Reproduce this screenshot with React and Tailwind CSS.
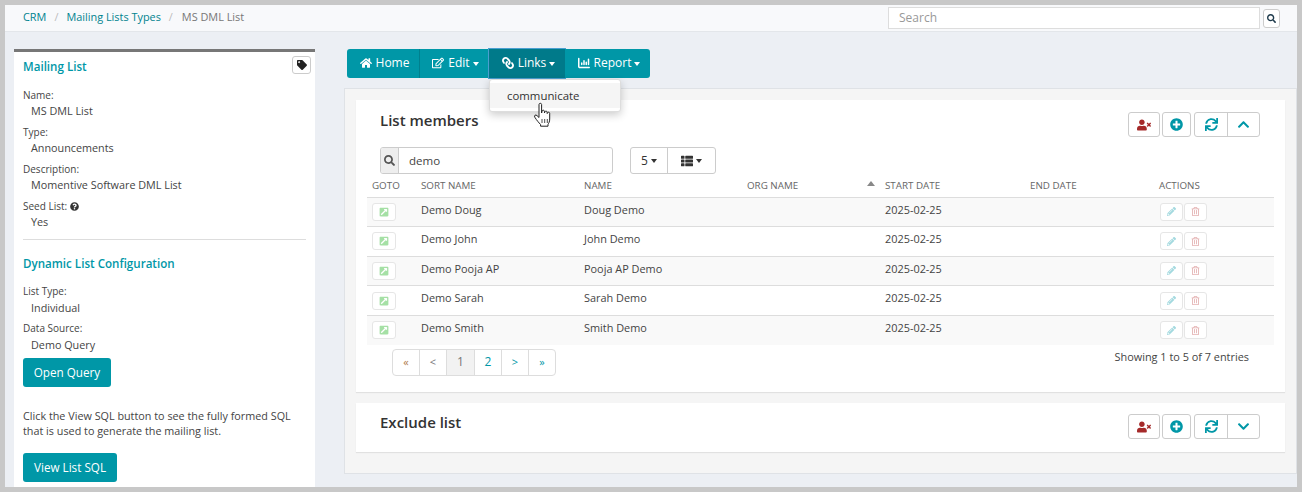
import React from 'react';
import {
  FaHome, FaRegEdit, FaLink, FaTag, FaQuestionCircle, FaSearch, FaUserTimes,
  FaPlusCircle, FaSync, FaChevronUp, FaChevronDown, FaPencilAlt, FaRegTrashAlt, FaExternalLinkSquareAlt, FaThList,
} from 'react-icons/fa';
import { FaChartColumn } from 'react-icons/fa6';

const members = [
  ['Demo Doug', 'Doug Demo'],
  ['Demo John', 'John Demo'],
  ['Demo Pooja AP', 'Pooja AP Demo'],
  ['Demo Sarah', 'Sarah Demo'],
  ['Demo Smith', 'Smith Demo'],
];

const Caret = () => (
  <span className="ml-[3px] inline-block h-0 w-0 border-x-[3.5px] border-t-[4px] border-x-transparent border-t-current align-middle" />
);

const Field = ({ label, value, extra }) => (
  <div className="mb-[5px]">
    <div className="flex items-center gap-[3px] text-[10px] leading-[16px] text-[#444]">{label}{extra}</div>
    <div className="pl-2 text-[10.8px] leading-[16px] text-[#444]">{value}</div>
  </div>
);

const ToolButton = ({ icon: Icon, label, caret, active, width, flip }) => (
  <button
    className={`flex h-[29px] items-center justify-center gap-[4px] pb-[1px] pl-[3px] text-[12px] text-white first:rounded-l-[3px] last:rounded-r-[3px] ${width} ${
      active ? 'bg-[#007a8a] outline outline-[#4a9fd0]' : 'border-r border-[#00808e] bg-[#0097a7] last:border-r-0'
    }`}
  >
    <Icon className={`text-[12px] ${flip ? '-scale-x-100' : ''}`} />
    <span>{label}{caret && <Caret />}</span>
  </button>
);

const PanelTools = ({ icon: Chevron }) => (
  <div className="flex gap-[2px]">
    <button className="flex h-[25px] w-[32px] items-center justify-center rounded-[3px] border border-[#ccc] bg-white text-[14px] text-[#a52a2a]">
      <FaUserTimes />
    </button>
    <button className="flex h-[25px] w-[29px] items-center justify-center rounded-[3px] border border-[#ccc] bg-white text-[13px] text-[#0097a7]">
      <FaPlusCircle />
    </button>
    <div className="ml-[1px] flex rounded-[3px] border border-[#ccc] bg-white text-[13px] text-[#0097a7]">
      <span className="flex h-[23px] w-[33px] items-center justify-center border-r border-[#ccc]"><FaSync /></span>
      <span className="flex h-[23px] w-[31px] items-center justify-center"><Chevron /></span>
    </div>
  </div>
);

const Pager = () => {
  const cells = [
    ['«', 'w-[27px] text-[#b07a4a]'],
    ['<', 'w-[27px] text-[#777]'],
    ['1', 'w-[28px] bg-[#f2f2f2] text-[#777] text-[12px]'],
    ['2', 'w-[27px] text-[#0097a7] text-[12px]'],
    ['>', 'w-[27px] text-[#0097a7]'],
    ['»', 'w-[26px] text-[#0097a7]'],
  ];
  return (
    <div className="flex h-[27px] overflow-hidden rounded-[4px] border border-[#ddd] bg-white">
      {cells.map(([t, c]) => (
        <span key={t} className={`flex items-center justify-center border-r border-[#ddd] text-[11px] last:border-r-0 ${c}`}>{t}</span>
      ))}
    </div>
  );
};

export default function App() {
  return (
    <div className="h-[492px] w-[1302px] overflow-hidden border-[5px] border-[#c8c8c8] bg-[#eceff4] font-['Open_Sans',sans-serif] text-[#444]">
      {/* breadcrumb bar */}
      <header className="flex h-[27px] items-center justify-between border-b border-[#e3e6ea] bg-[#f8f9fb] pl-[18px] pr-[17px] text-[10.9px]">
        <div className="flex items-center pb-[1px]">
          <span className="text-[#00838f]">CRM</span>
          <span className="px-[8px] text-[#bbb]">/</span>
          <span className="text-[#00838f]">Mailing Lists Types</span>
          <span className="pl-[8px] pr-[9px] text-[#bbb]">/</span>
          <span className="text-[#777]">MS DML List</span>
        </div>
        <div className="flex items-center gap-[3px]">
          <div className="flex h-[22px] w-[372px] items-center border border-[#ddd] bg-white pb-[1px] pl-[10px] text-[12px] text-[#999]">Search</div>
          <button className="flex h-[19px] w-[17px] items-center justify-center rounded-[3px] border border-[#ccc] bg-white text-[9px] text-[#1f3b4d]">
            <FaSearch />
          </button>
        </div>
      </header>

      <div className="flex items-start pl-[9px] pt-[17px]">
        {/* left column */}
        <aside className="h-[440px] w-[301px] shrink-0 border-t-[3px] border-[#777] bg-white pl-[9px] pr-[4px] pt-[4px]">
          <div className="flex items-start justify-between">
            <h3 className="pt-[2px] text-[11.6px] leading-[18px] font-semibold text-[#0097a7]">Mailing List</h3>
            <button className="flex h-[18px] w-[19px] items-center justify-center rounded-[3px] border border-[#ccc] bg-white text-[10px] text-[#222]">
              <FaTag />
            </button>
          </div>
          <div className="pt-[11px]">
            <Field label="Name:" value="MS DML List" />
            <Field label="Type:" value="Announcements" />
            <Field label="Description:" value="Momentive Software DML List" />
            <Field label="Seed List:" value="Yes" extra={<FaQuestionCircle className="text-[9px] text-[#333]" />} />
          </div>
          <hr className="mr-[5px] mt-[9px] border-[#ddd]" />
          <h3 className="mb-[10px] mt-[15px] text-[11.6px] leading-[18px] font-semibold text-[#0097a7]">Dynamic List Configuration</h3>
          <div className="mb-[3px]">
            <div className="text-[10px] leading-[16px] text-[#444]">List Type:</div>
            <div className="pl-2 text-[10.8px] leading-[18px] text-[#444]">Individual</div>
          </div>
          <div>
            <div className="text-[10px] leading-[16px] text-[#444]">Data Source:</div>
            <div className="pl-2 text-[10.8px] leading-[18px] text-[#444]">Demo Query</div>
          </div>
          <button className="mt-[4px] block h-[29px] w-[88px] rounded-[3px] bg-[#0097a7] text-[11.7px] text-white">Open Query</button>
          <p className="mr-[5px] mt-[21px] text-[10.8px] leading-[15px] text-[#444]">
            Click the View SQL button to see the fully formed SQL that is used to generate the mailing list.
          </p>
          <button className="mt-[15px] block h-[29px] w-[94px] rounded-[3px] bg-[#0097a7] text-[11.7px] text-white">View List SQL</button>
        </aside>

        {/* main column */}
        <main className="ml-[29px] flex-1">
          <div className="relative pl-[3px]">
            <div className="flex w-fit rounded-[3px]">
              <ToolButton icon={FaHome} label="Home" width="w-[73px]" />
              <ToolButton icon={FaRegEdit} label="Edit" caret width="w-[69px]" />
              <ToolButton icon={FaLink} label="Links" caret active width="w-[76px]" flip />
              <ToolButton icon={FaChartColumn} label="Report" caret width="w-[85px]" />
            </div>

            {/* open dropdown */}
            <div className="absolute left-[145px] top-[30px] z-10 h-[33px] w-[132px] rounded-[3px] border border-[#ddd] bg-white py-[3px] shadow-[0_3px_8px_rgba(0,0,0,0.2)]">
              <div className="bg-[#f5f5f5] py-[3px] pl-[17px] text-[11.4px] leading-[19px] text-[#333]">communicate</div>
            </div>
            <svg className="absolute left-[189px] top-[53px] z-20" width="20" height="28" viewBox="0 0 20 28">
              <path
                d="M6 2.500c0-1.600 2.600-1.600 2.600 0V11l.4-2c.4-1.200 2.400-1 2.400.3l.1 1.700.3-1.200c.4-1.100 2.300-.9 2.300.4l.1 1.300.3-.7c.5-1 2.200-.7 2.200.6v5.600c0 2.800-1 4-1.700 5.600v1.600H7.600v-1.600C5.800 20.500 3.800 18.500 1.800 15.200c-1-1.700.8-3 2.200-1.600L6 15.500Z"
                fill="#fff"
                stroke="#222"
                strokeWidth="1"
              />
              <path d="M9 17v4M11.700 17v4M14.300 17v4" stroke="#222" strokeWidth="0.8" />
            </svg>
          </div>

          <section className="mt-[10px] h-[386px] border border-[#dfe2e6] bg-[#f5f5f5] px-[11px] pt-[11px]">
            {/* list members card */}
            <div className="h-[292px] bg-white px-[11px] shadow-[0_1px_1px_rgba(0,0,0,0.08)]">
              <div className="flex items-start justify-between pl-[13px] pr-[14px] pt-[11px]">
                <h2 className="-mt-[1px] text-[15px] leading-[20px] font-semibold text-[#333]">List members</h2>
                <div className="pt-[1px]"><PanelTools icon={FaChevronUp} /></div>
              </div>

              <div className="mt-[10px] flex items-center pl-[13px]">
                <div className="flex h-[27px] w-[233px] overflow-hidden rounded-[3px] border border-[#ccc] bg-white">
                  <span className="flex w-[18px] items-center justify-center border-r border-[#ccc] bg-[#eee] text-[11px] text-[#555]"><FaSearch /></span>
                  <span className="flex items-center pl-[10px] text-[11.5px] text-[#444]">demo</span>
                </div>
                <div className="ml-[17px] flex h-[27px] rounded-[3px] border border-[#ccc] bg-white text-[#333]">
                  <span className="flex w-[37px] items-center justify-center border-r border-[#ccc] text-[12px]">5<Caret /></span>
                  <span className="flex w-[47px] items-center justify-center text-[12px]"><FaThList /><Caret /></span>
                </div>
              </div>

              <table className="mt-[4px] w-full table-fixed border-collapse text-[10.9px]">
                <colgroup>
                  <col className="w-[49px]" />
                  <col className="w-[163px]" />
                  <col className="w-[163px]" />
                  <col className="w-[138px]" />
                  <col className="w-[145px]" />
                  <col className="w-[129px]" />
                  <col />
                </colgroup>
                <thead>
                  <tr className="h-[19px] text-left text-[9.8px] text-[#666]">
                    <th className="pb-[2px] pl-[5px] font-normal">GOTO</th>
                    <th className="pb-[2px] pl-[5px] font-normal">SORT NAME</th>
                    <th className="pb-[2px] pl-[5px] font-normal">NAME</th>
                    <th className="relative pb-[2px] pl-[5px] font-normal">
                      ORG NAME
                      <span className="absolute right-[5px] top-[3px] h-0 w-0 border-x-[4px] border-b-[5px] border-x-transparent border-b-[#888]" />
                    </th>
                    <th className="pb-[2px] pl-[5px] font-normal">START DATE</th>
                    <th className="pb-[2px] pl-[5px] font-normal">END DATE</th>
                    <th className="pb-[2px] pl-[5px] font-normal">ACTIONS</th>
                  </tr>
                </thead>
                <tbody>
                  {members.map(([sort, name], i) => (
                    <tr key={sort} className={`h-[29.6px] border-t border-[#ddd] text-[#444] ${i % 2 === 0 ? 'bg-[#f9f9f9]' : 'bg-white'}`}>
                      <td className="pl-[5px]">
                        <span className="flex h-[18px] w-[24px] items-center justify-center rounded-[3px] border border-[#e6e6e6] bg-white text-[10px] text-[#a5e0a5]">
                          <FaExternalLinkSquareAlt />
                        </span>
                      </td>
                      <td className="pb-[4px] pl-[5px]">{sort}</td>
                      <td className="pb-[4px] pl-[5px]">{name}</td>
                      <td />
                      <td className="pb-[4px] pl-[5px]">2025-02-25</td>
                      <td />
                      <td className="pl-[5px]">
                        <div className="flex gap-[1px] pl-[1px]">
                          <span className="flex h-[18px] w-[23px] items-center justify-center rounded-[3px] border border-[#e6e6e6] bg-white text-[9px] text-[#a3d9df]"><FaPencilAlt /></span>
                          <span className="flex h-[18px] w-[23px] items-center justify-center rounded-[3px] border border-[#e6e6e6] bg-white text-[9px] text-[#e3b0b0]"><FaRegTrashAlt /></span>
                        </div>
                      </td>
                    </tr>
                  ))}
                </tbody>
              </table>

              <div className="mt-[4px] flex items-start justify-between pl-[25px] pr-[25px]">
                <Pager />
                <span className="text-[10.9px] leading-[16px] text-[#444]">Showing 1 to 5 of 7 entries</span>
              </div>
            </div>

            {/* exclude list card */}
            <div className="mt-[11px] flex h-[49px] items-start justify-between bg-white pl-[24px] pr-[25px] pt-[9px] shadow-[0_1px_1px_rgba(0,0,0,0.08)]">
              <h2 className="text-[15px] leading-[20px] font-semibold text-[#333]">Exclude list</h2>
              <div className="pt-[2px]"><PanelTools icon={FaChevronDown} /></div>
            </div>
          </section>
        </main>
      </div>
    </div>
  );
}
